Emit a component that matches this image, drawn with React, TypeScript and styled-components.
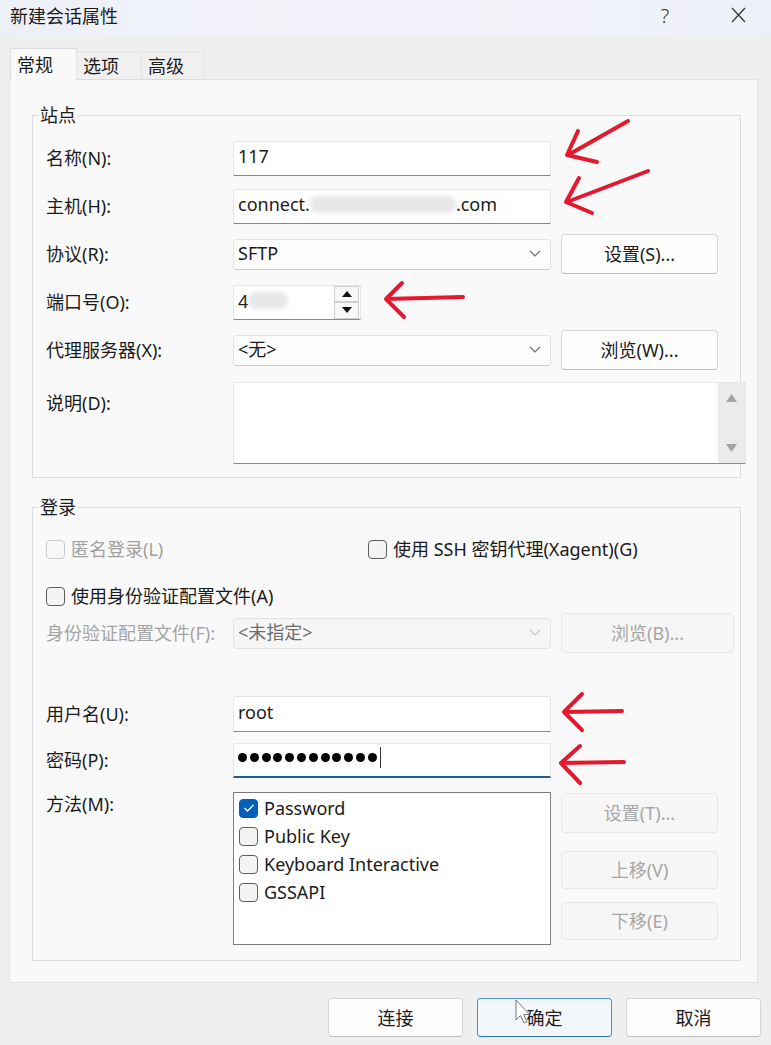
import React from 'react';
import styled, { createGlobalStyle } from 'styled-components';

const GlobalStyle = createGlobalStyle`
  html, body {
    margin: 0;
    padding: 0;
    background: #efefef;
  }
  body {
    font-family: "Noto Sans", "Noto Sans CJK SC", sans-serif;
    font-size: 18px;
    color: #1b1b1b;
  }
  * {
    box-sizing: border-box;
  }
`;

const Window = styled.div`
  position: relative;
  width: 771px;
  height: 1045px;
  background: #efefef;
  overflow: hidden;
`;

const TitleBar = styled.div`
  height: 36px;
  display: flex;
  align-items: center;
  padding: 0 10px 0 10px;
  background: linear-gradient(90deg, #eef0f8 0%, #f2f3f9 50%, #eef0f8 100%);
`;

const Title = styled.div`
  flex: 1;
  font-size: 18px;
  line-height: 24px;
  margin-top: -5px;
`;

const TitleButton = styled.div<{ $ml?: number }>`
  width: 46px;
  height: 36px;
  margin-left: ${(p) => p.$ml ?? 0}px;
  display: flex;
  align-items: center;
  justify-content: center;
  margin-top: -6px;
  font-size: 20px;
  font-weight: 300;
  color: #333;
`;

const TabStrip = styled.div`
  display: flex;
  align-items: flex-end;
  height: 32px;
  margin-top: 12px;
  margin-bottom: -1px;
  padding-left: 10px;
  position: relative;
  z-index: 1;
`;

const Tab = styled.div<{ $active?: boolean; $w: number }>`
  width: ${(p) => p.$w}px;
  height: ${(p) => (p.$active ? 32 : 28)}px;
  margin-left: ${(p) => (p.$active ? 0 : -1)}px;
  background: ${(p) => (p.$active ? '#f9f9f9' : '#f0f0f0')};
  border: 1px solid ${(p) => (p.$active ? '#dcdcdc' : '#e4e4e4')};
  border-bottom: ${(p) => (p.$active ? 'none' : '1px solid #dcdcdc')};
  padding-left: 6px;
  display: flex;
  align-items: center;
  font-size: 18px;
  line-height: 24px;
`;

const Panel = styled.div`
  margin: 0 13px 0 9px;
  background: #f9f9f9;
  border: 1px solid #e2e2e2;
  padding: 24px 16px 21px 22px;
`;

const Group = styled.fieldset<{ $mt?: number; $pt: number; $pb: number }>`
  margin: ${(p) => p.$mt ?? 0}px 0 0 0;
  padding: ${(p) => p.$pt}px 0 ${(p) => p.$pb}px 13px;
  border: 1px solid #dcdcdc;
  min-width: 0;
`;

const Legend = styled.legend`
  padding: 0 2px;
  margin-left: -8px;
  font-size: 18px;
  line-height: 22px;
`;

const Row = styled.div<{ $h: number; $mt?: number; $top?: boolean }>`
  display: flex;
  align-items: ${(p) => (p.$top ? 'flex-start' : 'center')};
  height: ${(p) => p.$h}px;
  margin-top: ${(p) => p.$mt ?? 0}px;
`;

const Label = styled.div<{ $disabled?: boolean; $pt?: number }>`
  width: 187px;
  flex-shrink: 0;
  font-size: 18px;
  line-height: 24px;
  padding-top: ${(p) => p.$pt ?? 0}px;
  color: ${(p) => (p.$disabled ? '#a4a4a4' : '#1b1b1b')};
  white-space: nowrap;
`;

const TextBox = styled.div<{ $w: number; $h: number; $focused?: boolean }>`
  width: ${(p) => p.$w}px;
  height: ${(p) => p.$h}px;
  flex-shrink: 0;
  background: #fff;
  border: 1px solid #e6e6e6;
  border-bottom: ${(p) => (p.$focused ? '2px solid #1d5e99' : '1px solid #8a8a8a')};
  border-radius: 2px 2px 0 0;
  padding: 0 0 4px 4px;
  display: flex;
  align-items: center;
  font-size: 18px;
  line-height: 24px;
  white-space: nowrap;
`;

const Blur = styled.span<{ $w: number }>`
  display: inline-block;
  width: ${(p) => p.$w}px;
  height: 17px;
  background: #e7e7e7;
  border-radius: 8px;
  filter: blur(2px);
`;

const Select = styled.div<{ $disabled?: boolean }>`
  width: 318px;
  height: 31px;
  flex-shrink: 0;
  background: ${(p) => (p.$disabled ? '#f6f6f6' : '#fdfdfd')};
  border: 1px solid #e3e3e3;
  border-bottom-color: ${(p) => (p.$disabled ? '#e3e3e3' : '#cdcdcd')};
  border-radius: 3px;
  display: flex;
  align-items: center;
  justify-content: space-between;
  padding: 0 9px 2px 4px;
  font-size: 18px;
  line-height: 24px;
  color: ${(p) => (p.$disabled ? '#6c6c6c' : '#1b1b1b')};
`;

const Button = styled.div<{
  $w: number;
  $h: number;
  $disabled?: boolean;
  $primary?: boolean;
  $mt?: number;
  $ml?: number;
}>`
  width: ${(p) => p.$w}px;
  height: ${(p) => p.$h}px;
  flex-shrink: 0;
  margin-top: ${(p) => p.$mt ?? 0}px;
  margin-left: ${(p) => p.$ml ?? 0}px;
  background: ${(p) => (p.$disabled ? '#f6f6f6' : p.$primary ? '#f3f7fc' : '#fdfdfd')};
  border: 1px solid
    ${(p) => (p.$disabled ? '#e6e6e6' : p.$primary ? '#4d8fd1' : '#d6d6d6')};
  border-bottom-color: ${(p) =>
    p.$disabled ? '#e6e6e6' : p.$primary ? '#2e73b8' : '#bdbdbd'};
  border-radius: 4px;
  display: flex;
  align-items: center;
  justify-content: center;
  font-size: 18px;
  line-height: 24px;
  color: ${(p) => (p.$disabled ? '#a6a6a6' : '#1b1b1b')};
`;

const Spin = styled.div`
  width: 128px;
  height: 35px;
  display: flex;
  background: #fff;
  border: 1px solid #e6e6e6;
  border-bottom: 1px solid #8a8a8a;
`;

const SpinText = styled.div`
  flex: 1;
  display: flex;
  align-items: center;
  padding: 0 0 3px 4px;
  font-size: 18px;
  line-height: 24px;
`;

const SpinButtons = styled.div`
  width: 25px;
  display: flex;
  flex-direction: column;
  margin-right: 1px;
`;

const SpinBtn = styled.div`
  flex: 1;
  display: flex;
  align-items: center;
  justify-content: center;
  background: #f8f8f8;
  border: 1px solid #cfcfcf;
`;

const Memo = styled.div`
  width: 513px;
  height: 82px;
  flex-shrink: 0;
  display: flex;
  justify-content: flex-end;
  background: #fff;
  border: 1px solid #e6e6e6;
  border-bottom: 1px solid #8a8a8a;
`;

const Track = styled.div`
  width: 27px;
  background: #ebebeb;
  display: flex;
  flex-direction: column;
  justify-content: space-between;
  align-items: center;
  padding: 11px 0 11px;
`;

const CheckItem = styled.label<{ $w?: number; $disabled?: boolean }>`
  display: flex;
  align-items: center;
  gap: 6px;
  width: ${(p) => (p.$w ? `${p.$w}px` : 'auto')};
  font-size: 18px;
  line-height: 24px;
  color: ${(p) => (p.$disabled ? '#a0a0a0' : '#1b1b1b')};
  white-space: nowrap;
`;

const Check = styled.span<{ $checked?: boolean; $disabled?: boolean }>`
  width: 19px;
  height: 19px;
  flex-shrink: 0;
  border-radius: 4px;
  border: 1px solid
    ${(p) => (p.$checked ? '#005fb8' : p.$disabled ? '#cacaca' : '#5e5e5e')};
  background: ${(p) => (p.$checked ? '#005fb8' : p.$disabled ? '#f7f7f7' : '#f4f4f4')};
  display: flex;
  align-items: center;
  justify-content: center;
`;

const MethodList = styled.div`
  width: 318px;
  height: 153px;
  flex-shrink: 0;
  background: #fff;
  border: 1px solid #7c7c7c;
  padding: 1px 0 0 5px;
`;

const MethodItem = styled(CheckItem)`
  height: 28px;
  gap: 6px;
`;

const SideButtons = styled.div`
  display: flex;
  flex-direction: column;
  margin-left: 10px;
`;

const FieldGap = styled.div`
  width: 10px;
  flex-shrink: 0;
`;

const Dots = styled.div`
  display: flex;
  align-items: center;
  gap: 2.8px;
`;

const Dot = styled.span`
  width: 9px;
  height: 9px;
  border-radius: 50%;
  background: #000;
`;

const Caret = styled.span`
  width: 1px;
  height: 21px;
  background: #3a3a3a;
  margin-left: 3px;
`;

const Footer = styled.div`
  display: flex;
  justify-content: flex-end;
  gap: 14px;
  margin-top: 15px;
  padding-right: 10px;
`;

const Overlay = styled.svg`
  position: absolute;
  left: 0;
  top: 0;
  pointer-events: none;
`;

const Cursor = styled.svg`
  position: absolute;
  left: 515px;
  top: 999px;
  pointer-events: none;
`;

const Chevron = ({ disabled }: { disabled?: boolean }) => (
  <svg width="12" height="7" viewBox="0 0 12 7">
    <path
      d="M1 1 L6 6 L11 1"
      fill="none"
      stroke={disabled ? '#c4c4c4' : '#6a6a6a'}
      strokeWidth="1.1"
    />
  </svg>
);

const Tri = ({ up, color, w = 9, h = 6 }: { up?: boolean; color: string; w?: number; h?: number }) => (
  <svg width={w} height={h} viewBox={`0 0 ${w} ${h}`}>
    <path
      d={up ? `M0 ${h} L${w / 2} 0 L${w} ${h} Z` : `M0 0 L${w / 2} ${h} L${w} 0 Z`}
      fill={color}
    />
  </svg>
);

const Tick = () => (
  <svg width="12" height="10" viewBox="0 0 12 10">
    <path d="M1.5 5 L4.5 8 L10.5 2" fill="none" stroke="#fff" strokeWidth="1.3" />
  </svg>
);

const arrows = [
  'M628 121 L568 155 M578 131 L567 155 L597 162',
  'M648 171 L567 202 M579 178 L566 202 L592 213',
  'M463 297 L386 299 M402 283 L386 299 L404 317',
  'M622 711 L564 712 M582 694 L564 712 L582 730',
  'M624 762 L561 763 M580 746 L561 763 L580 783',
];

const methods = [
  { name: 'Password', checked: true },
  { name: 'Public Key' },
  { name: 'Keyboard Interactive' },
  { name: 'GSSAPI' },
];

const App: React.FC = () => {
  return (
    <Window>
      <GlobalStyle />
      <TitleBar>
        <Title>新建会话属性</Title>
        <TitleButton>?</TitleButton>
        <TitleButton $ml={27}>
          <svg width="15" height="16" viewBox="0 0 15 16">
            <path d="M1 1 L14 15 M14 1 L1 15" stroke="#333" strokeWidth="1.2" />
          </svg>
        </TitleButton>
      </TitleBar>

      <TabStrip>
        <Tab $active $w={67}>常规</Tab>
        <Tab $w={66}>选项</Tab>
        <Tab $w={64}>高级</Tab>
      </TabStrip>

      <Panel>
        <Group $pt={12} $pb={13}>
          <Legend>站点</Legend>
          <Row $h={40}>
            <Label>名称(N):</Label>
            <TextBox $w={318} $h={35}>117</TextBox>
          </Row>
          <Row $h={40} $mt={8}>
            <Label>主机(H):</Label>
            <TextBox $w={318} $h={35}>
              connect.
              <Blur $w={146} />
              .com
            </TextBox>
          </Row>
          <Row $h={40} $mt={8}>
            <Label>协议(R):</Label>
            <Select>
              SFTP
              <Chevron />
            </Select>
            <FieldGap />
            <Button $w={157} $h={40}>设置(S)...</Button>
          </Row>
          <Row $h={40} $mt={8}>
            <Label>端口号(O):</Label>
            <Spin>
              <SpinText>
                4<Blur $w={40} />
              </SpinText>
              <SpinButtons>
                <SpinBtn>
                  <Tri up color="#111" w={10} h={6} />
                </SpinBtn>
                <SpinBtn>
                  <Tri color="#111" w={10} h={6} />
                </SpinBtn>
              </SpinButtons>
            </Spin>
          </Row>
          <Row $h={40} $mt={8}>
            <Label>代理服务器(X):</Label>
            <Select>
              {'<无>'}
              <Chevron />
            </Select>
            <FieldGap />
            <Button $w={157} $h={40}>浏览(W)...</Button>
          </Row>
          <Row $h={82} $mt={12} $top>
            <Label $pt={9}>说明(D):</Label>
            <Memo>
              <Track>
                <Tri up color="#a3a3a3" w={11} h={8} />
                <Tri color="#a3a3a3" w={11} h={8} />
              </Track>
            </Memo>
          </Row>
        </Group>

        <Group $mt={18} $pt={0} $pb={15}>
          <Legend>登录</Legend>
          <Row $h={40} $mt={11}>
            <CheckItem $w={322} $disabled>
              <Check $disabled />
              匿名登录(L)
            </CheckItem>
            <CheckItem>
              <Check />
              使用 SSH 密钥代理(Xagent)(G)
            </CheckItem>
          </Row>
          <Row $h={34} $mt={10}>
            <CheckItem>
              <Check />
              使用身份验证配置文件(A)
            </CheckItem>
          </Row>
          <Row $h={40}>
            <Label $disabled>身份验证配置文件(F):</Label>
            <Select $disabled>
              {'<未指定>'}
              <Chevron disabled />
            </Select>
            <FieldGap />
            <Button $w={173} $h={40} $disabled>浏览(B)...</Button>
          </Row>
          <Row $h={40} $mt={41}>
            <Label>用户名(U):</Label>
            <TextBox $w={318} $h={36}>root</TextBox>
          </Row>
          <Row $h={40} $mt={6}>
            <Label>密码(P):</Label>
            <TextBox $w={318} $h={35} $focused>
              <Dots>
                {Array.from({ length: 12 }).map((_, i) => (
                  <Dot key={i} />
                ))}
              </Dots>
              <Caret />
            </TextBox>
          </Row>
          <Row $h={153} $mt={12} $top>
            <Label $pt={0}>方法(M):</Label>
            <MethodList>
              {methods.map((m) => (
                <MethodItem key={m.name}>
                  <Check $checked={m.checked}>{m.checked && <Tick />}</Check>
                  {m.name}
                </MethodItem>
              ))}
            </MethodList>
            <SideButtons>
              <Button $w={157} $h={40} $mt={1} $disabled>设置(T)...</Button>
              <Button $w={157} $h={38} $mt={18} $disabled>上移(V)</Button>
              <Button $w={157} $h={38} $mt={13} $disabled>下移(E)</Button>
            </SideButtons>
          </Row>
        </Group>
      </Panel>

      <Footer>
        <Button $w={135} $h={39}>连接</Button>
        <Button $w={135} $h={39} $primary>确定</Button>
        <Button $w={135} $h={39}>取消</Button>
      </Footer>

      <Overlay width="771" height="1045" viewBox="0 0 771 1045">
        {arrows.map((d, i) => (
          <path
            key={i}
            d={d}
            fill="none"
            stroke="#e3192f"
            strokeWidth="4"
            strokeLinecap="round"
            strokeLinejoin="round"
          />
        ))}
      </Overlay>

      <Cursor width="16" height="26" viewBox="0 0 16 26">
        <path
          d="M1 1 L1 21 L5.5 16.5 L9 24 L12 22.6 L8.6 15.4 L14.5 15.4 Z"
          fill="#fff"
          stroke="#777"
          strokeWidth="1"
          strokeLinejoin="round"
        />
      </Cursor>
    </Window>
  );
};

export default App;
